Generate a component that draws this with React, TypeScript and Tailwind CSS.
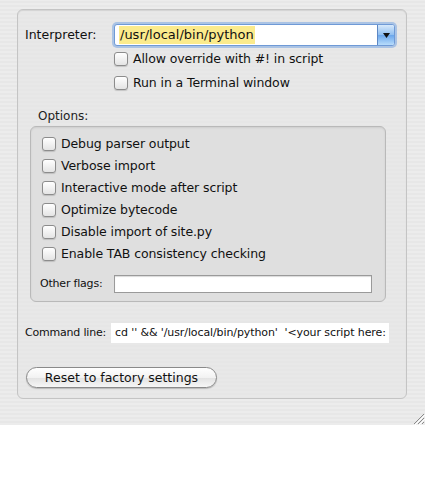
import React from 'react';

const font = 'font-["DejaVu_Sans","Liberation_Sans",sans-serif]';

function Check({ label }: { label: string }) {
  return (
    <div className="flex items-center h-[22px]">
      <span className="w-[14px] h-[14px] rounded-[3px] border border-[#8c8c8c] bg-[linear-gradient(#ffffff,#e4e4e4)] shadow-[0_1px_1px_rgba(0,0,0,0.15)] shrink-0" />
      <span className="ml-[5px] text-[12.5px] tracking-[-0.1px] text-[#111]">{label}</span>
    </div>
  );
}

export default function App() {
  const options = [
    'Debug parser output',
    'Verbose import',
    'Interactive mode after script',
    'Optimize bytecode',
    'Disable import of site.py',
    'Enable TAB consistency checking',
  ];

  return (
    <div className={`w-[425px] h-[500px] bg-white ${font}`}>
      <div className="relative h-[425px] pt-[9px] pl-[17px] bg-[repeating-linear-gradient(0deg,#ececec_0px,#ececec_2px,#e7e7e7_2px,#e7e7e7_4px)]">
        {/* main group box */}
        <div className="w-[390px] h-[390px] rounded-[6px] border border-[#c4c4c4] bg-[#e6e6e6]/60 shadow-[inset_0_1px_1px_rgba(0,0,0,0.08)] flex flex-col">
          {/* Interpreter */}
          <div className="flex items-center mt-[14px] ml-[7px]">
            <span className="w-[89px] text-[12.5px] text-[#111]">Interpreter:</span>
            <div className="flex w-[281px] h-[22px] rounded-[3px] border border-[#6f9ad6] bg-white shadow-[0_0_0_2px_rgba(120,165,225,0.55)]">
              <div className="flex-1 flex items-center pl-[4px]">
                <span className="bg-[#fbeb8c] px-[1px] text-[13px] leading-[18px] text-[#111]">/usr/local/bin/python</span>
              </div>
              <div className="w-[17px] h-full rounded-r-[2px] border-l border-[#5d87c4] bg-[linear-gradient(#d7e9fb,#8fbef0_50%,#6aa6ec_51%,#b8dcfb)] flex items-center justify-center">
                <svg width="7" height="5" viewBox="0 0 7 5"><path d="M0 0h7L3.5 5z" fill="#111" /></svg>
              </div>
            </div>
          </div>
          <div className="ml-[96px] mt-[2px] flex flex-col gap-[2px]">
            <Check label="Allow override with #! in script" />
            <Check label="Run in a Terminal window" />
          </div>

          {/* Options */}
          <span className="ml-[20px] mt-[15px] text-[12px] text-[#222] leading-[14px]">Options:</span>
          <div className="ml-[12px] mt-[3px] w-[356px] h-[176px] rounded-[6px] border border-[#b9b9b9] bg-[#dcdcdc]/70 shadow-[inset_0_1px_2px_rgba(0,0,0,0.08)] pl-[11px] pt-[6px]">
            {options.map((o) => (
              <Check key={o} label={o} />
            ))}
            <div className="flex items-center mt-[10px] -ml-[2px]">
              <span className="w-[74px] text-[11px] tracking-[-0.2px] text-[#111]">Other flags:</span>
              <div className="w-[258px] h-[18px] bg-white border border-[#9a9a9a] shadow-[inset_0_1px_1px_rgba(0,0,0,0.15)]" />
            </div>
          </div>

          {/* Command line */}
          <div className="flex items-center ml-[7px] mt-[21px]">
            <span className="w-[86px] text-[11px] tracking-[-0.2px] text-[#111] whitespace-nowrap">Command line:</span>
            <div className="w-[278px] h-[20px] bg-white overflow-hidden whitespace-nowrap pl-[4px] text-[11px] tracking-[-0.1px] leading-[20px] text-[#111]">
              cd '' &amp;&amp; '/usr/local/bin/python'&nbsp; '&lt;your script here:
            </div>
          </div>

          {/* Reset button */}
          <div className="ml-[8px] mt-[22px]">
            <button className="w-[191px] h-[21px] rounded-full border border-[#8a8a8a] bg-[linear-gradient(#ffffff,#f2f2f2_50%,#e2e2e2_51%,#f6f6f6)] shadow-[0_1px_1px_rgba(0,0,0,0.2)] text-[12.5px] text-[#111] leading-[19px]">
              Reset to factory settings
            </button>
          </div>
        </div>

        {/* resize grip */}
        <svg className="absolute right-0 bottom-0" width="13" height="13" viewBox="0 0 13 13">
          <path d="M12 2L2 12M12 6L6 12M12 10L10 12" stroke="#8a8a8a" strokeWidth="1" />
          <path d="M13 3L3 13M13 7L7 13" stroke="#ffffff" strokeWidth="1" />
        </svg>
      </div>
    </div>
  );
}
